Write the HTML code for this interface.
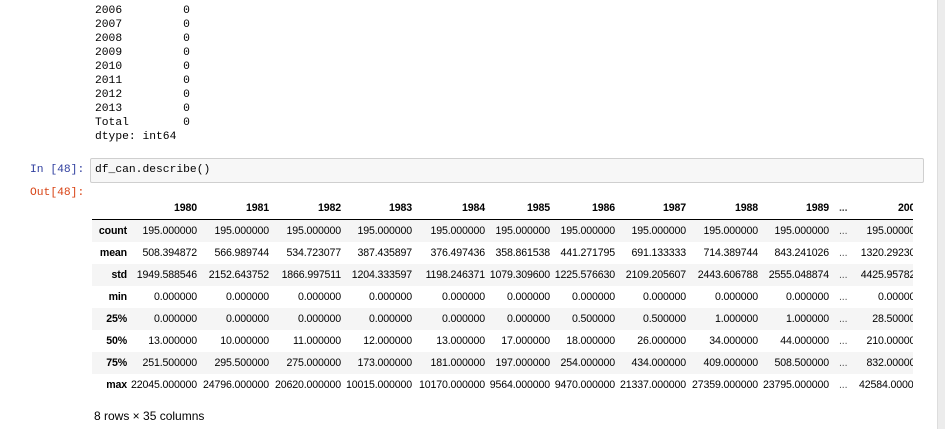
<!DOCTYPE html>
<html><head><style>
body{margin:0;width:945px;height:429px;background:#fff;position:relative;overflow:hidden;font-family:"Liberation Sans",Arial,sans-serif}
pre{margin:0;position:absolute;left:95px;top:4px;line-height:14px;font-family:"Liberation Mono",monospace;font-size:11.3px;color:#000}
.p{position:absolute;font-family:"Liberation Mono",monospace;font-size:11.3px}
.sb{position:absolute;right:0;top:0;width:7px;height:429px;background:#ececec;border-left:1px solid #ddd}
.clip{position:absolute;left:0;top:0;width:913px;height:429px;overflow:hidden}
.r{position:absolute;left:0;height:22px;line-height:22px;width:950px;display:flex;font-size:10.6px;letter-spacing:-0.15px;color:#000}
.r span{display:block;text-align:right;flex:none}
.r span:nth-child(1){width:127px;font-weight:bold}
.r span:nth-child(2){width:70px}
.r span:nth-child(3){width:72px}
.r span:nth-child(4){width:72px}
.r span:nth-child(5){width:71px}
.r span:nth-child(6){width:73px}
.r span:nth-child(7){width:65px}
.r span:nth-child(8){width:65px}
.r span:nth-child(9){width:71px}
.r span:nth-child(10){width:72px}
.r span:nth-child(11){width:71px}
.r span:nth-child(12){width:30px;text-align:left;padding-left:10px;box-sizing:border-box;color:#555}
.r span:nth-child(13){width:62px}
.h span{font-weight:bold}
.g{position:absolute;left:92px;width:821px;height:22px;background:#f5f5f5}
</style></head><body>
<pre>2006         0
2007         0
2008         0
2009         0
2010         0
2011         0
2012         0
2013         0
Total        0
dtype: int64</pre>
<div class="p" style="left:30px;top:164px;color:#303f9f">In [48]:</div>
<div style="position:absolute;left:90px;top:158px;width:832px;height:23px;background:#f7f7f7;border:1px solid #cfcfcf;border-radius:2px"></div>
<div class="p" style="left:95px;top:164px">df_can.describe()</div>
<div class="p" style="left:30px;top:187px;color:#d84315">Out[48]:</div>
<div class="clip">
<div class="g" style="top:220px"></div>
<div class="g" style="top:264px"></div>
<div class="g" style="top:308px"></div>
<div class="g" style="top:352px"></div>
<div style="position:absolute;left:92px;top:219px;width:821px;height:1px;background:#000"></div>
<div class="r h" style="top:197px"><span></span><span>1980</span><span>1981</span><span>1982</span><span>1983</span><span>1984</span><span>1985</span><span>1986</span><span>1987</span><span>1988</span><span>1989</span><span>...</span><span>2000</span></div>
<div class="r" style="top:220px"><span>count</span><span>195.000000</span><span>195.000000</span><span>195.000000</span><span>195.000000</span><span>195.000000</span><span>195.000000</span><span>195.000000</span><span>195.000000</span><span>195.000000</span><span>195.000000</span><span>...</span><span>195.000000</span></div>
<div class="r" style="top:242px"><span>mean</span><span>508.394872</span><span>566.989744</span><span>534.723077</span><span>387.435897</span><span>376.497436</span><span>358.861538</span><span>441.271795</span><span>691.133333</span><span>714.389744</span><span>843.241026</span><span>...</span><span>1320.292308</span></div>
<div class="r" style="top:264px"><span>std</span><span>1949.588546</span><span>2152.643752</span><span>1866.997511</span><span>1204.333597</span><span>1198.246371</span><span>1079.309600</span><span>1225.576630</span><span>2109.205607</span><span>2443.606788</span><span>2555.048874</span><span>...</span><span>4425.957827</span></div>
<div class="r" style="top:286px"><span>min</span><span>0.000000</span><span>0.000000</span><span>0.000000</span><span>0.000000</span><span>0.000000</span><span>0.000000</span><span>0.000000</span><span>0.000000</span><span>0.000000</span><span>0.000000</span><span>...</span><span>0.000000</span></div>
<div class="r" style="top:308px"><span>25%</span><span>0.000000</span><span>0.000000</span><span>0.000000</span><span>0.000000</span><span>0.000000</span><span>0.000000</span><span>0.500000</span><span>0.500000</span><span>1.000000</span><span>1.000000</span><span>...</span><span>28.500000</span></div>
<div class="r" style="top:330px"><span>50%</span><span>13.000000</span><span>10.000000</span><span>11.000000</span><span>12.000000</span><span>13.000000</span><span>17.000000</span><span>18.000000</span><span>26.000000</span><span>34.000000</span><span>44.000000</span><span>...</span><span>210.000000</span></div>
<div class="r" style="top:352px"><span>75%</span><span>251.500000</span><span>295.500000</span><span>275.000000</span><span>173.000000</span><span>181.000000</span><span>197.000000</span><span>254.000000</span><span>434.000000</span><span>409.000000</span><span>508.500000</span><span>...</span><span>832.000000</span></div>
<div class="r" style="top:374px"><span>max</span><span>22045.000000</span><span>24796.000000</span><span>20620.000000</span><span>10015.000000</span><span>10170.000000</span><span>9564.000000</span><span>9470.000000</span><span>21337.000000</span><span>27359.000000</span><span>23795.000000</span><span>...</span><span>42584.000000</span></div>
</div>
<div style="position:absolute;left:94px;top:409px;font-size:12px">8 rows × 35 columns</div>
<div class="sb"></div>
</body></html>
